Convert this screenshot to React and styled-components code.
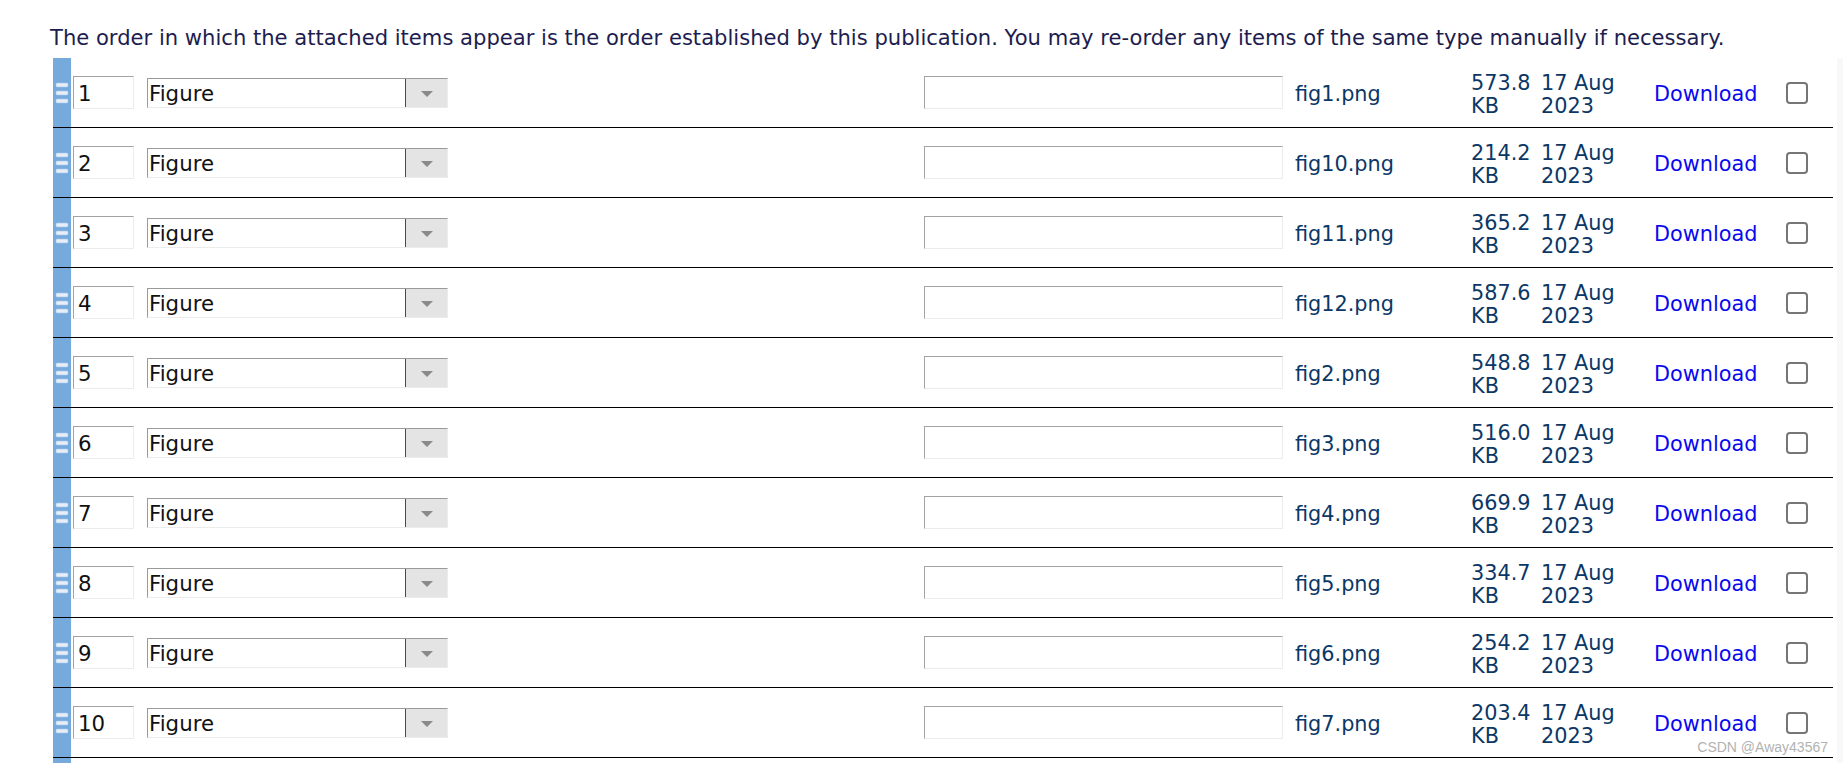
import React from "react";
import styled, { createGlobalStyle } from "styled-components";

const GlobalStyle = createGlobalStyle`
  html, body {
    margin: 0;
    padding: 0;
    background: #ffffff;
    overflow: hidden;
  }
  body {
    font-family: "DejaVu Sans", Verdana, sans-serif;
  }
`;

const Page = styled.div`
  position: relative;
  height: 763px;
  overflow: hidden;
`;

const Intro = styled.p`
  margin: 25px 0 0 50px;
  font-size: 21.1px;
  line-height: 25px;
  color: #1d1d4f;
  white-space: nowrap;
`;

const ListWrap = styled.div`
  display: flex;
  margin-top: 8px;
  gap: 4px;
`;

const Table = styled.div`
  margin-left: 53px;
  width: 1780px;
  flex: none;
`;

const Gutter = styled.div`
  flex: 1;
  background: #f8f8f8;
`;

const Row = styled.div`
  display: grid;
  grid-template-columns: 18px 69px 777px 371px 176px 70px 113px 132px 1fr;
  height: ${({ $stub }) => ($stub ? "20px" : "69px")};
  border-bottom: ${({ $stub }) => ($stub ? "none" : "1px solid #000")};
`;

const Handle = styled.div`
  background: #76a9dc;
  display: flex;
  align-items: center;
  justify-content: center;
`;

const Cell = styled.div`
  display: flex;
  align-items: center;
  padding-left: ${({ $pad }) => $pad ?? 7}px;
  padding-top: ${({ $text }) => ($text ? "4px" : "0")};
  font-size: 20.8px;
  line-height: 23px;
  color: #0b3766;
`;

const NumberInput = styled.div`
  box-sizing: border-box;
  width: 61px;
  height: 33px;
  padding: 2px 0 0 4px;
  display: flex;
  align-items: center;
  font-size: 21.3px;
  color: #111;
  background: #fff;
  border-style: solid;
  border-width: 1px;
  border-color: #a3a3a3 #ececec #ececec #a3a3a3;
`;

const Select = styled.div`
  box-sizing: border-box;
  width: 301px;
  height: 30px;
  display: flex;
  background: #fff;
  border-style: solid;
  border-width: 1px;
  border-color: #9a9a9a #ececec #ececec #9a9a9a;
`;

const SelectValue = styled.span`
  flex: 1;
  padding: 1px 0 0 1px;
  font-size: 21.3px;
  line-height: 28px;
  color: #111;
`;

const SelectArrow = styled.span`
  width: 41px;
  background: #e4e4e4;
  border-left: 1px solid #4a4a4a;
  display: flex;
  align-items: center;
  justify-content: center;

  &::after {
    content: "";
    border-left: 6.5px solid transparent;
    border-right: 6.5px solid transparent;
    border-top: 6px solid #8a8a8a;
    margin-top: 2px;
  }
`;

const TextInput = styled.div`
  box-sizing: border-box;
  width: 359px;
  height: 33px;
  background: #fff;
  border-style: solid;
  border-width: 1px;
  border-color: #a3a3a3 #ececec #ececec #a3a3a3;
`;

const Stack = styled.span`
  display: block;
  white-space: nowrap;
`;

const DownloadLink = styled.a`
  color: #0a0aee;
  text-decoration: none;
  cursor: pointer;
`;

const Checkbox = styled.span`
  box-sizing: border-box;
  width: 22px;
  height: 22px;
  border: 2px solid #767676;
  border-radius: 4px;
  background: #fff;
`;

const Watermark = styled.span`
  position: absolute;
  right: 15px;
  bottom: 8px;
  font-family: "Liberation Sans", Arial, sans-serif;
  font-size: 14px;
  color: #b2b2b2;
`;

const Grip = () => (
  <svg width="14" height="22" viewBox="0 0 14 22">
    {[1, 9, 17].map((y) => (
      <rect key={y} x="1" y={y} width="12" height="4" rx="1" fill="#e6eef8" stroke="#a9c8e8" strokeWidth="0.6" />
    ))}
  </svg>
);

const items = [
  { file: "fig1.png", size: "573.8" },
  { file: "fig10.png", size: "214.2" },
  { file: "fig11.png", size: "365.2" },
  { file: "fig12.png", size: "587.6" },
  { file: "fig2.png", size: "548.8" },
  { file: "fig3.png", size: "516.0" },
  { file: "fig4.png", size: "669.9" },
  { file: "fig5.png", size: "334.7" },
  { file: "fig6.png", size: "254.2" },
  { file: "fig7.png", size: "203.4" },
];

const AttachmentRow = ({ index, item }) => (
  <Row>
    <Handle>
      <Grip />
    </Handle>
    <Cell $pad={2}>
      <NumberInput>{index}</NumberInput>
    </Cell>
    <Cell>
      <Select>
        <SelectValue>Figure</SelectValue>
        <SelectArrow />
      </Select>
    </Cell>
    <Cell>
      <TextInput />
    </Cell>
    <Cell $text>{item.file}</Cell>
    <Cell $text>
      <div>
        <Stack>{item.size}</Stack>
        <Stack>KB</Stack>
      </div>
    </Cell>
    <Cell $text>
      <div>
        <Stack>17 Aug</Stack>
        <Stack>2023</Stack>
      </div>
    </Cell>
    <Cell $text>
      <DownloadLink>Download</DownloadLink>
    </Cell>
    <Cell>
      <Checkbox />
    </Cell>
  </Row>
);

export default function App() {
  return (
    <Page>
      <GlobalStyle />
      <Intro>
        The order in which the attached items appear is the order established by this publication. You may
        re-order any items of the same type manually if necessary.
      </Intro>
      <ListWrap>
        <Table>
          {items.map((item, i) => (
            <AttachmentRow key={item.file} index={i + 1} item={item} />
          ))}
          <Row $stub>
            <Handle />
          </Row>
        </Table>
        <Gutter />
      </ListWrap>
      <Watermark>CSDN @Away43567</Watermark>
    </Page>
  );
}
